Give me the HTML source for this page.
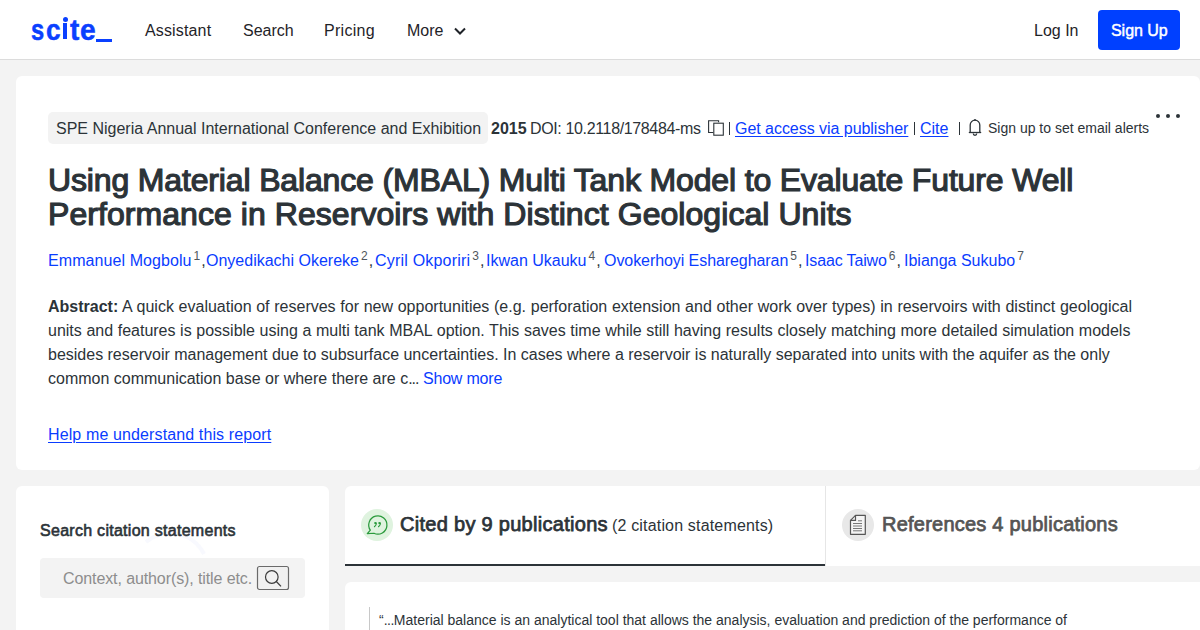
<!DOCTYPE html>
<html><head><meta charset="utf-8">
<style>
*{box-sizing:border-box;margin:0;padding:0}
html,body{width:1200px;height:630px;overflow:hidden;background:#f3f3f3;font-family:"Liberation Sans",sans-serif;color:#2c3338}
.t{position:absolute;white-space:nowrap}
.f14{font-size:14px;line-height:14px}
.f16{font-size:16px;line-height:16px}
.f20{font-size:20px;line-height:20px}
.b{font-weight:bold}
#hdr{position:absolute;left:0;top:0;width:1200px;height:60px;background:#fff;border-bottom:1px solid #dcdcdc}
.nav{color:#1f2328}
.btn{position:absolute;left:1098px;top:10px;width:82px;height:40px;background:#0040ff;border-radius:4px}
.card{position:absolute;background:#fff;border-radius:6px}
.chip{position:absolute;left:48px;top:112px;width:440px;height:32px;background:#f3f3f3;border-radius:5px}
.lnk{color:#0a3cff}
.u{text-decoration:underline;text-underline-offset:2px}
.logo{position:absolute;font-size:29px;line-height:29px;font-weight:bold;color:#0a40ff;transform-origin:0 0;-webkit-text-stroke:0.5px #0a40ff}
sup{letter-spacing:0;font-size:12px;line-height:0;position:relative;top:-6px;vertical-align:baseline;color:#50565c;margin-left:2px}
.c{color:#2c3338;margin-left:1px;letter-spacing:0}
</style></head><body>
<div id="hdr">
  <div class="t nav f16" style="left:145px;top:23px;letter-spacing:0.15px">Assistant</div>
  <div class="t nav f16" style="left:243px;top:23px">Search</div>
  <div class="t nav f16" style="left:324px;top:23px;letter-spacing:0.3px">Pricing</div>
  <div class="t nav f16" style="left:407px;top:23px">More</div>
  <svg class="t" style="left:452px;top:25px" width="16" height="12" viewBox="0 0 16 12"><path d="M3 3.5 L8 8.5 L13 3.5" fill="none" stroke="#1f2328" stroke-width="2"/></svg>
  <div class="t nav f16" style="left:1034px;top:23px">Log In</div>
  <div class="btn"></div>
  <div class="t f16" style="left:1111px;top:23px;color:#fff;-webkit-text-stroke:0.45px #fff;letter-spacing:-0.05px">Sign Up</div>
</div>
<div class="logo" style="left:31px;top:16px;transform:scaleX(0.817)">s</div>
<div class="logo" style="left:46px;top:16px;transform:scaleX(0.905)">c</div>
<div class="t" style="left:62.8px;top:23px;width:4.6px;height:16.4px;background:#0a40ff"></div><div class="t" style="left:62.6px;top:17.2px;width:5px;height:5px;border-radius:50%;background:#0a40ff"></div>
<div class="logo" style="left:70px;top:16px;transform:scaleX(0.962)">t</div>
<div class="logo" style="left:80px;top:16px;transform:scaleX(0.972)">e</div>
<div class="t" style="left:96px;top:39px;width:15.5px;height:3px;background:#0a40ff"></div>

<div class="card" style="left:16px;top:76px;width:1184px;height:394px"></div>
<div class="chip"></div>
<div class="t f16" style="left:56px;top:121px">SPE Nigeria Annual International Conference and Exhibition</div>
<div class="t f16 b" style="left:491px;top:121px">2015</div>
<div class="t f16" style="left:530px;top:121px;letter-spacing:-0.36px">DOI: 10.2118/178484-ms</div>
<svg class="t" style="left:704px;top:114px" width="24" height="26" viewBox="0 0 24 26"><path d="M9.3 18.5 H4.6 V6.7 H14.6 V8.3" fill="none" stroke="#2c3338" stroke-width="1.1"/><rect x="9.8" y="9.2" width="9.5" height="12" fill="none" stroke="#2c3338" stroke-width="1.1"/></svg>
<div class="t" style="left:729px;top:122px;width:1px;height:13px;background:#2c3338"></div>
<div class="t f16 lnk u" style="left:735px;top:121px;letter-spacing:-0.04px">Get access via publisher</div>
<div class="t" style="left:914px;top:122px;width:1px;height:13px;background:#2c3338"></div>
<div class="t f16 lnk u" style="left:920px;top:121px">Cite</div>
<div class="t" style="left:959px;top:122px;width:1px;height:13px;background:#2c3338"></div>
<svg class="t" style="left:966px;top:117px" width="18" height="20" viewBox="0 0 18 20"><path d="M4.2 15.5 V8 A4.8 4.8 0 0 1 13.8 8 V15.5" fill="none" stroke="#2c3338" stroke-width="1.3"/><path d="M2.8 15.5 H15.2" stroke="#2c3338" stroke-width="1.3"/><path d="M7.3 16.6 A1.7 1.7 0 0 0 10.7 16.6" fill="none" stroke="#2c3338" stroke-width="1.3"/><circle cx="9" cy="3" r="0.9" fill="#2c3338"/></svg>
<div class="t f14" style="left:988px;top:121px">Sign up to set email alerts</div>
<svg class="t" style="left:1154px;top:112px" width="28" height="8" viewBox="0 0 28 8"><circle cx="4" cy="4" r="2" fill="#2c3338"/><circle cx="14" cy="4" r="2" fill="#2c3338"/><circle cx="24" cy="4" r="2" fill="#2c3338"/></svg>

<div class="t" style="left:48px;top:163px;font-size:32px;line-height:34px;letter-spacing:-0.15px;-webkit-text-stroke:1.2px #2c3338">Using Material Balance (MBAL) Multi Tank Model to Evaluate Future Well<br><span style="letter-spacing:0.06px">Performance in Reservoirs with Distinct Geological Units</span></div>

<div class="t f16 lnk" style="left:48px;top:253px;letter-spacing:0.08px">Emmanuel Mogbolu<sup>1</sup><span class="c">,</span></div>
<div class="t f16 lnk" style="left:206px;top:253px">Onyedikachi Okereke<sup>2</sup><span class="c">,</span></div>
<div class="t f16 lnk" style="left:375px;top:253px;letter-spacing:0.2px">Cyril Okporiri<sup>3</sup><span class="c">,</span></div>
<div class="t f16 lnk" style="left:486px;top:253px">Ikwan Ukauku<sup>4</sup><span class="c">,</span></div>
<div class="t f16 lnk" style="left:604px;top:253px;letter-spacing:-0.07px">Ovokerhoyi Esharegharan<sup>5</sup><span class="c">,</span></div>
<div class="t f16 lnk" style="left:805px;top:253px;letter-spacing:-0.14px">Isaac Taiwo<sup>6</sup><span class="c">,</span></div>
<div class="t f16 lnk" style="left:904px;top:253px">Ibianga Sukubo<sup>7</sup></div>


<div class="t f16" style="left:48px;top:299px;word-spacing:0.25px"><b>Abstract:</b> A quick evaluation of reserves for new opportunities (e.g. perforation extension and other work over types) in reservoirs with distinct geological</div>
<div class="t f16" style="left:48px;top:323px;word-spacing:0.16px">units and features is possible using a multi tank MBAL option. This saves time while still having results closely matching more detailed simulation models</div>
<div class="t f16" style="left:48px;top:347px;word-spacing:-0.05px">besides reservoir management due to subsurface uncertainties. In cases where a reservoir is naturally separated into units with the aquifer as the only</div>
<div class="t f16" style="left:48px;top:371px">common communication base or where there are c<span style="letter-spacing:-1px">...</span> <span class="lnk" style="letter-spacing:-0.2px">Show more</span></div>

<div class="t f16 lnk u" style="left:48px;top:427px;letter-spacing:0.12px">Help me understand this report</div>

<div class="card" style="left:16px;top:486px;width:313px;height:200px"></div>
<svg class="t" style="left:120px;top:520px" width="110" height="80" viewBox="0 0 110 80"><path d="M26 22 A38 38 0 0 1 84 34" fill="none" stroke="#f8f9fe" stroke-width="4"/></svg>

<div class="t f16" style="left:40px;top:523px;letter-spacing:0.28px;-webkit-text-stroke:0.6px #2c3338">Search citation statements</div>
<div class="t" style="left:40px;top:558px;width:265px;height:40px;background:#f3f3f3;border-radius:4px"></div>
<div class="t f16" style="left:63px;top:571px;color:#8d8d8d;letter-spacing:-0.1px">Context, author(s), title etc.</div>
<svg class="t" style="left:256px;top:565px" width="34" height="26" viewBox="0 0 34 26"><rect x="1.5" y="1.5" width="31" height="23" rx="2" fill="#f0f0f0" stroke="#6a6a6a" stroke-width="1.2"/><circle cx="15.8" cy="12" r="6.3" fill="none" stroke="#3a3a3a" stroke-width="1.2"/><path d="M20.3 16.5 L25 21.3" stroke="#3a3a3a" stroke-width="1.2"/></svg>

<div class="card" style="left:345px;top:486px;width:900px;height:80px;border-radius:6px 0 0 0"></div>
<div class="t" style="left:345px;top:564px;width:480px;height:2px;background:#2c3338"></div>
<div class="t" style="left:825px;top:486px;width:1px;height:80px;background:#e6e6e6"></div>
<svg class="t" style="left:361px;top:509px" width="32" height="32" viewBox="0 0 32 32"><circle cx="16" cy="16" r="16" fill="#dff3df"/><path d="M12.95 24.25 A9.1 9.1 0 1 0 9.35 21.2 L6.3 24.6 Z" fill="none" stroke="#2a9a3c" stroke-width="1.25" stroke-linejoin="round"/><circle cx="14.3" cy="14.1" r="1.15" fill="#2a9a3c"/><path d="M15.3 14.1 C15.4 15.8 14.8 16.9 13.5 17.6" fill="none" stroke="#2a9a3c" stroke-width="1.2" stroke-linecap="round"/><circle cx="18.4" cy="14.1" r="1.15" fill="#2a9a3c"/><path d="M19.4 14.1 C19.5 15.8 18.9 16.9 17.6 17.6" fill="none" stroke="#2a9a3c" stroke-width="1.2" stroke-linecap="round"/></svg>
<div class="t f20" style="left:400px;top:514px;letter-spacing:0.29px;-webkit-text-stroke:0.75px #2c3338">Cited by 9 publications</div>
<div class="t f16" style="left:612px;top:518px;letter-spacing:0.17px">(2 citation statements)</div>
<svg class="t" style="left:842px;top:509px" width="32" height="32" viewBox="0 0 32 32"><circle cx="16" cy="16" r="16" fill="#e8e8e8"/><path d="M8.5 11.3 L13.5 6.3 H23.3 V25.3 H8.5 Z" fill="#f4f4f4" stroke="#555" stroke-width="1.2" stroke-linejoin="round"/><path d="M8.5 11.3 H13.5 V6.3" fill="none" stroke="#555" stroke-width="1.2"/><path d="M16 11.8 H20 M11 14.5 H20 M11 17 H20 M11 19.5 H20 M11 21.8 H20" stroke="#777" stroke-width="1"/></svg>
<div class="t f20" style="left:882px;top:514px;color:#555;letter-spacing:0.23px;-webkit-text-stroke:0.75px #555">References 4 publications</div>

<div class="card" style="left:345px;top:582px;width:900px;height:100px;border-radius:6px 0 0 0"></div>
<div class="t" style="left:369px;top:607px;width:1px;height:30px;background:#c8c8c8"></div>
<div class="t f14" style="left:379px;top:613px">“<span style="letter-spacing:-0.5px">...</span>Material balance is an analytical tool that allows the analysis, evaluation and prediction of the performance of</div>
</body></html>
